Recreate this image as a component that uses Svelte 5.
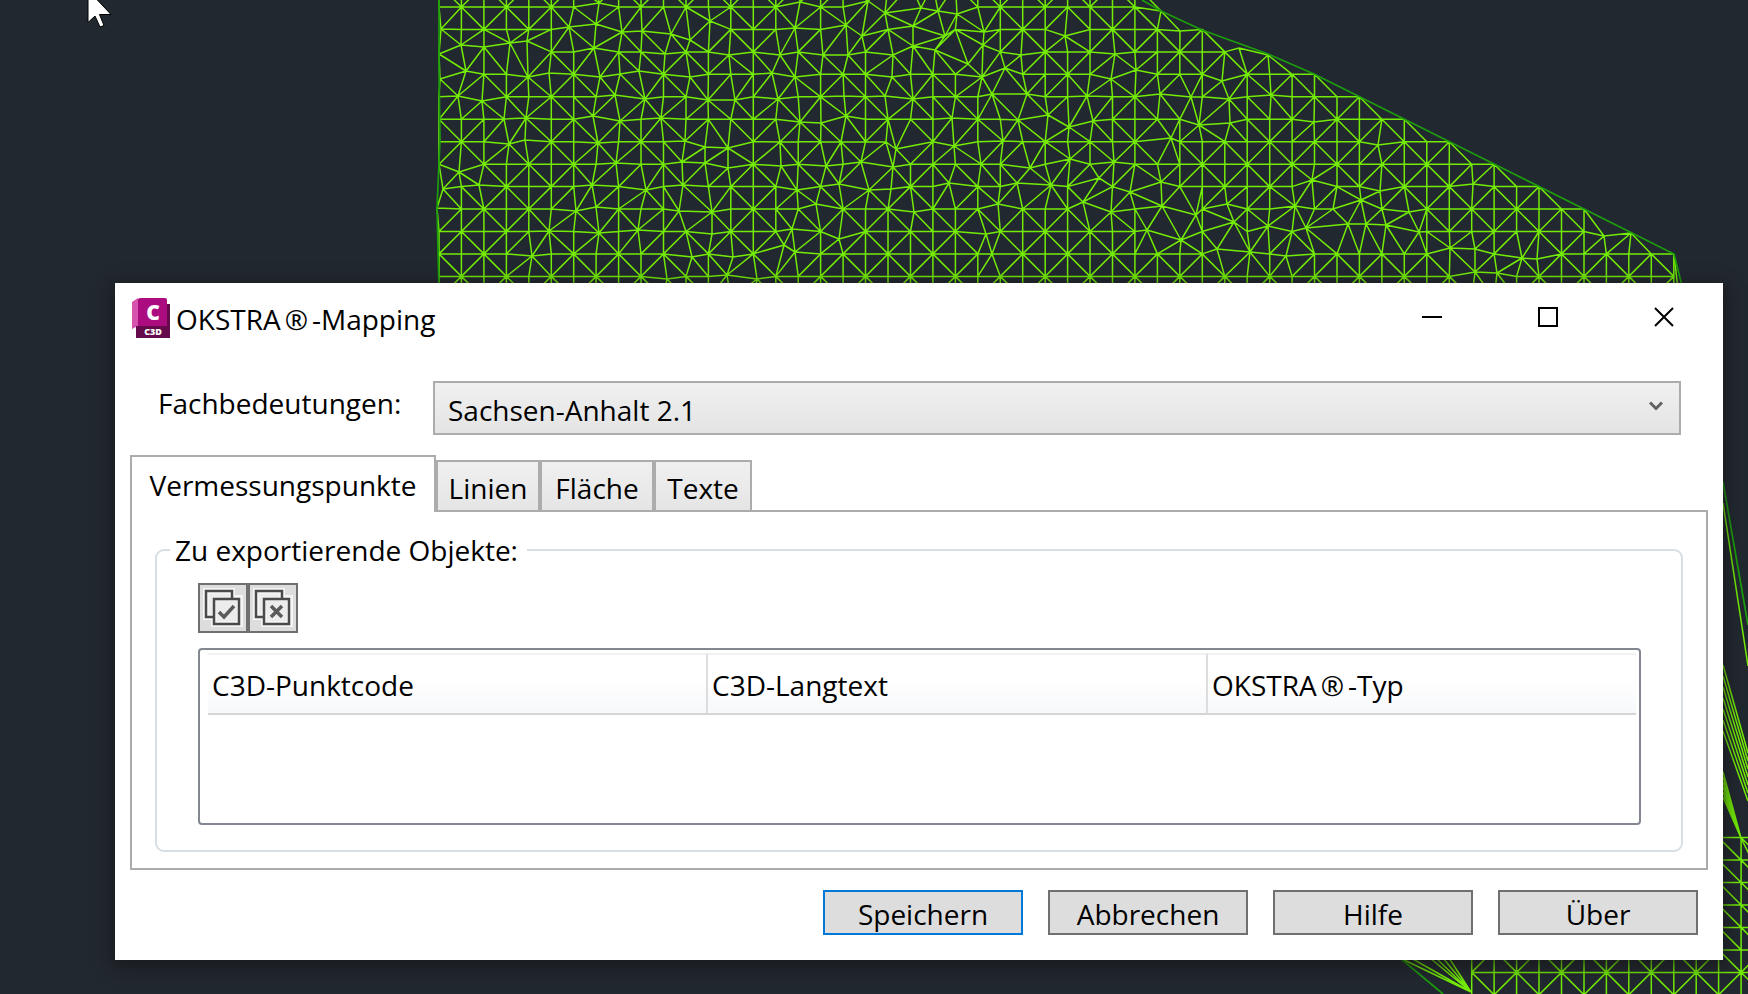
<script>
    const step = 22.45;
    const originX = 439;
    const originY = 7;

    // survey points that are off the regular grid, as [column, x, y] for each row
    const surveyed = [
        [[7, 599, 3], [16, 800, 2], [19, 868, 1], [20, 885, 13], [21, 921, 8], [22, 938, 11], [23, 957, 14], [32, 1161, 11]],
        [[0, 441, 29], [6, 569, 27], [7, 596, 24], [8, 622, 32], [9, 642, 31], [10, 671, 34], [11, 690, 40], [12, 710, 21], [16, 795, 28], [18, 846, 25], [19, 862, 36], [21, 913, 26], [22, 945, 36], [24, 984, 32], [28, 1065, 36], [33, 1180, 31]],
        [[0, 439, 54], [1, 461, 45], [2, 484, 47], [3, 510, 43], [4, 527, 41], [7, 594, 48], [10, 665, 54], [13, 729, 55], [15, 780, 55], [17, 823, 55], [18, 848, 55], [20, 893, 55], [21, 913, 46], [22, 935, 50], [23, 968, 64], [24, 983, 45], [26, 1021, 55], [30, 1115, 54], [36, 1239, 48], [37, 1268, 55]],
        [[0, 440, 79], [1, 466, 71], [4, 528, 77], [5, 549, 73], [7, 600, 77], [8, 620, 74], [9, 639, 71], [11, 690, 77], [15, 772, 73], [16, 795, 77], [20, 892, 77], [24, 982, 77], [25, 1005, 68], [30, 1111, 79], [31, 1136, 70], [35, 1222, 81]],
        [[1, 458, 96], [2, 482, 101], [8, 615, 95], [9, 645, 99], [12, 708, 100], [13, 735, 100], [15, 778, 99], [18, 844, 96], [20, 885, 96], [21, 913, 99], [25, 992, 94], [26, 1027, 94], [29, 1087, 96], [32, 1160, 94], [33, 1191, 97], [35, 1229, 99], [37, 1271, 95]],
        [[3, 504, 119], [4, 526, 118], [7, 593, 116], [8, 620, 121], [10, 661, 118], [16, 800, 122], [17, 821, 123], [18, 846, 116], [23, 952, 118], [26, 1018, 120], [27, 1048, 115], [28, 1069, 127], [29, 1093, 121], [34, 1199, 125], [35, 1230, 123], [39, 1314, 122]],
        [[3, 509, 144], [4, 525, 140], [7, 598, 143], [11, 685, 141], [12, 705, 147], [13, 728, 148], [15, 780, 142], [18, 841, 142], [20, 886, 142], [21, 896, 149], [23, 954, 146], [25, 1003, 141], [32, 1171, 138], [42, 1378, 145]],
        [[1, 459, 172], [8, 616, 163], [11, 682, 162], [12, 705, 163], [13, 728, 168], [15, 781, 166], [17, 826, 166], [19, 861, 162], [20, 893, 167], [24, 981, 164], [26, 1030, 168], [28, 1070, 159], [30, 1114, 162]],
        [[0, 443, 189], [2, 479, 185], [7, 592, 185], [9, 646, 190], [11, 683, 185], [16, 797, 190], [18, 839, 184], [19, 869, 190], [20, 891, 189], [23, 949, 183], [26, 1017, 183], [27, 1051, 185], [29, 1099, 178], [31, 1130, 192], [32, 1161, 182], [39, 1312, 180], [42, 1380, 191], [46, 1473, 184]],
        [[0, 437, 208], [6, 576, 211], [7, 596, 207], [11, 679, 211], [12, 712, 212], [17, 816, 204], [21, 914, 212], [25, 998, 204], [29, 1083, 202], [30, 1111, 212], [32, 1162, 206], [33, 1196, 215], [35, 1227, 204], [38, 1295, 206], [40, 1333, 209], [41, 1361, 200], [43, 1409, 212]],
        [[5, 549, 231], [7, 599, 233], [9, 638, 230], [12, 712, 234], [16, 792, 229], [18, 839, 239], [24, 986, 234], [32, 1147, 230], [33, 1181, 240], [35, 1234, 222], [37, 1268, 226], [39, 1306, 228], [40, 1348, 224], [41, 1366, 224], [42, 1386, 225], [43, 1419, 232], [52, 1604, 236], [53, 1631, 233]],
        [[4, 532, 256], [11, 692, 257], [13, 733, 257], [15, 784, 245], [16, 795, 252], [25, 992, 254], [35, 1217, 249], [36, 1250, 252], [38, 1286, 256], [45, 1450, 248], [46, 1475, 249], [48, 1522, 258], [49, 1537, 259]],
        [[10, 667, 279], [13, 727, 275], [14, 757, 279], [46, 1475, 272], [47, 1497, 273]]
    ];

    function point(col, row) {
        const moved = (surveyed[row] || []).find((p) => p[0] === col);
        return moved ? [moved[1], moved[2]] : [originX + col * step, originY + row * step];
    }

    function line(a, b) {
        return `M${a[0].toFixed(1)} ${a[1].toFixed(1)}L${b[0].toFixed(1)} ${b[1].toFixed(1)}`;
    }

    function mesh(firstRow, lastRow, firstCol, lastColOf, sameWay = false) {
        let d = '';
        for (let row = firstRow; row <= lastRow; row++) {
            const last = lastColOf(row);
            for (let col = firstCol; col <= last; col++) {
                const a = point(col, row);
                const c = point(col, row + 1);
                const e = point(col + 1, row + 1);
                d += line(a, c);
                if (col === last) {
                    // the outer edge steps out two columns per row
                    if (col < 55) d += line(a, e);
                    continue;
                }
                const b = point(col + 1, row);
                d += line(a, b);
                const falling = Math.hypot(a[0] - e[0], a[1] - e[1]);
                const rising = Math.hypot(b[0] - c[0], b[1] - c[1]);
                const useFalling = Math.abs(falling - rising) > 2 ? falling < rising : (col + row) % 2 !== 0;
                d += sameWay || useFalling ? line(a, e) : line(b, c);
            }
        }
        return d;
    }

    // last column of each row along the sloping edge
    const rowEnds = [32, 34, 37, 39, 41, 43, 45, 47, 49, 51, 53, 55, 55];

    const upper = mesh(-1, 12, 0, (row) => rowEnds[row] ?? 31);
    const lower = mesh(42, 44, 46, () => 60);
    const side = mesh(37, 41, 56, () => 60, true);

    const fan = [0, 1, 2, 3, 4, 5, 6].map((i) => line([1723, 665 + i * 11], [1748, 753 + i * 8])).join('')
        + [0, 1, 2, 3, 4, 5].map((i) => line([1723, 772 + i * 5], [1741, 838])).join('')
        + [1400, 1411, 1430, 1436, 1443, 1449].map((x) => line([x, 958], [1471, 992])).join('');

    const tabs = ['Vermessungspunkte', 'Linien', 'Fläche', 'Texte'];
    const columns = ['C3D-Punktcode', 'C3D-Langtext', 'OKSTRA®-Typ'];
    const actions = ['Speichern', 'Abbrechen', 'Hilfe', 'Über'];

    let active = 'Vermessungspunkte';
    let mapping = 'Sachsen-Anhalt 2.1';
</script>

<main>
    <svg class="drawing" aria-hidden="true">
        <path class="tin" d={upper} />
        <path class="tin" d={lower} />
        <path class="tin" d={side} />
        <path class="tin" d={fan} />
        <path class="tin" d="M1723 503L1748 666M1741 838L1750 856M1674 254L1678 290" />
        <path class="edge" d="M439 0L439 70L440 140L437 208L439 290M1142 0L1161 11L1202 30L1268 54L1314 74L1494 164L1674 254L1683 290M1723 482L1748 625M1400 958L1443 994" />
    </svg>
    <svg class="cursor" width="26" height="28" viewBox="0 0 26 28" aria-hidden="true">
        <path d="M1 -10V22.500L8 16L13 27L17 25.500L12.500 14.500H24Z" fill="#fff" stroke="#000" />
    </svg>

    <section class="window" aria-label="OKSTRA®-Mapping">
        <header>
            <svg width="38" height="40" viewBox="0 0 38 40" aria-hidden="true">
                <path d="M0 4L6 0V28L0 31Z" fill="#d653ae" />
                <path d="M34 6H38V40H4V28H34Z" fill="#650a4b" />
                <path d="M8 0H33Q35 0 35 2V28H6V1Z" fill="#ab0d80" />
                <text x="21" y="22" font-size="21">C</text>
                <text x="21" y="37" font-size="9">C3D</text>
            </svg>
            <h1>OKSTRA<span class="registered">®</span>-Mapping</h1>
            <div class="caption">
                <button type="button" aria-label="Minimieren">
                    <svg width="20" height="20"><path d="M0 10H20" /></svg>
                </button>
                <button type="button" aria-label="Maximieren">
                    <svg width="20" height="20"><path d="M1 1H19V19H1Z" /></svg>
                </button>
                <button type="button" aria-label="Schließen">
                    <svg width="20" height="20"><path d="M1 1L19 19M19 1L1 19" /></svg>
                </button>
            </div>
        </header>

        <div class="mapping">
            <label for="mapping">Fachbedeutungen:</label>
            <div class="select">
                <select id="mapping" bind:value={mapping}>
                    <option>Sachsen-Anhalt 2.1</option>
                </select>
                <svg width="14" height="10" viewBox="0 0 14 10" aria-hidden="true">
                    <path d="M1 1.500L7 7.500L13 1.500" />
                </svg>
            </div>
        </div>

        <div class="tabs" role="tablist">
            {#each tabs as tab}
                <button type="button" role="tab" class:active={tab === active} aria-selected={tab === active} on:click={() => (active = tab)}>{tab}</button>
            {/each}
        </div>

        <div class="panel">
            <fieldset>
                <legend>Zu exportierende Objekte:</legend>
                <div class="toolbar">
                    <button type="button" aria-label="Alle auswählen">
                        <svg width="46" height="46" viewBox="0 0 46 46">
                            <path class="halo" d="M6 6H32V13H40V39H14V32H6Z" />
                            <path d="M13 32H6V6H32V13" />
                            <path d="M14 14H39V39H14Z" />
                            <path class="mark" d="M19 27L24 32L34 21" />
                        </svg>
                    </button>
                    <button type="button" aria-label="Auswahl aufheben">
                        <svg width="46" height="46" viewBox="0 0 46 46">
                            <path class="halo" d="M6 6H32V13H40V39H14V32H6Z" />
                            <path d="M13 32H6V6H32V13" />
                            <path d="M14 14H39V39H14Z" />
                            <path class="mark" d="M21 21L32 32M32 21L21 32" />
                        </svg>
                    </button>
                </div>
                <div class="list">
                    <table>
                        <thead>
                            <tr>
                                {#each columns as column}
                                    <th scope="col">{#each column.split('®') as part, i}{#if i > 0}<span class="registered">®</span>{/if}{part}{/each}</th>
                                {/each}
                            </tr>
                        </thead>
                    </table>
                </div>
            </fieldset>
        </div>

        <footer>
            {#each actions as action, i}
                <button type="button" class:default={i === 0}>{action}</button>
            {/each}
        </footer>
    </section>
</main>

<style>
    :global(body) {
        background-color: #222830;
    }
    main {
        position: relative;
        box-sizing: border-box;
        min-height: 100vh;
        padding: 283px 25px 34px 115px;
        overflow: hidden;
        color: #000;
        font-family: "Open Sans", "Noto Sans", sans-serif;
        font-size: 28px;
        line-height: 36px;
    }
    .drawing {
        position: absolute;
        inset: 0;
        width: 100%;
        height: 100%;
    }
    .drawing path {
        fill: none;
        stroke-width: 1.5;
    }
    .drawing .tin {
        stroke: #73eb05;
    }
    .drawing .edge {
        stroke: #1c9d0b;
        stroke-width: 1.7;
    }
    .cursor {
        position: absolute;
        top: 0;
        left: 87px;
    }
    .window {
        position: relative;
        background-color: #fff;
        box-shadow: 0 4px 16px 2px rgba(20, 20, 20, 0.7);
    }
    button, select {
        box-sizing: border-box;
        margin: 0;
        padding: 0;
        border-radius: 0;
        color: inherit;
        font: inherit;
    }
    .registered {
        margin: 0 4px;
    }
    header {
        display: flex;
        align-items: center;
        height: 70px;
        padding-left: 17px;
    }
    header text {
        fill: #fff;
        font-weight: 800;
        text-anchor: middle;
    }
    h1 {
        margin: 2px 0 0 6px;
        font-size: 28px;
        font-weight: 400;
    }
    .caption {
        display: flex;
        align-self: flex-start;
        margin-right: 1px;
        margin-left: auto;
    }
    .caption button {
        display: grid;
        place-items: center;
        width: 116px;
        height: 68px;
        border: 0;
        background: none;
    }
    .caption path {
        fill: none;
        stroke: #000;
        stroke-width: 2;
    }
    .mapping {
        display: flex;
        align-items: flex-start;
        padding: 28px 42px 20px 43px;
    }
    .mapping label {
        width: 275px;
        line-height: 44px;
    }
    .select {
        position: relative;
        flex: 1;
    }
    select {
        display: block;
        appearance: none;
        width: 100%;
        height: 54px;
        padding: 3px 40px 0 13px;
        border: 2px solid #acacac;
        background: linear-gradient(#f0f0f0, #e4e4e4);
    }
    .select svg {
        position: absolute;
        top: 20px;
        right: 18px;
        pointer-events: none;
    }
    .select path {
        fill: none;
        stroke: #606060;
        stroke-width: 3;
    }
    .tabs {
        display: grid;
        grid-template-columns: 306px 104px 114px 98px;
        align-items: end;
        height: 57px;
        margin: 0 15px -2px;
    }
    .tabs button {
        height: 52px;
        padding-top: 3px;
        border: 2px solid #acacac;
        background: linear-gradient(#f0f0f0, #e5e5e5);
    }
    .tabs .active {
        position: relative;
        height: 57px;
        padding-top: 0;
        border-bottom: 0;
        background: #fff;
    }
    .panel {
        margin: 0 15px;
        padding: 20px 23px 16px;
        border: 2px solid #acacac;
    }
    fieldset {
        min-width: 0;
        margin: 0;
        padding: 15px 40px 25px 41px;
        border: 2px solid #d5dfe5;
        border-radius: 9px;
    }
    legend {
        margin-left: -28px;
        padding: 0 9px 0 5px;
    }
    .toolbar {
        display: flex;
        margin-bottom: 15px;
    }
    .toolbar button {
        width: 50px;
        height: 50px;
        border: 2px solid #707070;
        background-color: #ddd;
    }
    .toolbar svg {
        display: block;
    }
    .toolbar path {
        fill: none;
        stroke: #4a4a4a;
        stroke-width: 2.5;
    }
    .toolbar .halo {
        fill: #ececec;
        stroke: #f4f4f4;
        stroke-width: 6;
    }
    .toolbar .mark {
        stroke: #5a5a5a;
        stroke-width: 3.5;
    }
    .list {
        box-sizing: border-box;
        min-height: 177px;
        padding: 3px 3px 3px 8px;
        border: 2px solid #828790;
        border-radius: 4px;
    }
    table {
        width: 100%;
        border-collapse: separate;
        border-spacing: 0;
        table-layout: fixed;
    }
    th {
        box-sizing: border-box;
        height: 62px;
        padding: 2px 4px 0;
        border-top: 2px solid #f2f2f2;
        border-bottom: 2px solid #d5d5d5;
        background: linear-gradient(#fff 40%, #f7f8fa);
        font-weight: 400;
        text-align: left;
    }
    th:not(:last-child) {
        width: 500px;
        border-right: 2px solid #dcdddf;
    }
    footer {
        display: flex;
        justify-content: flex-end;
        gap: 25px;
        padding: 20px 25px 25px;
    }
    footer button {
        width: 200px;
        height: 45px;
        padding-top: 3px;
        border: 2px solid #707070;
        background-color: #ddd;
    }
    footer .default {
        border-color: #0078d7;
    }
</style>
